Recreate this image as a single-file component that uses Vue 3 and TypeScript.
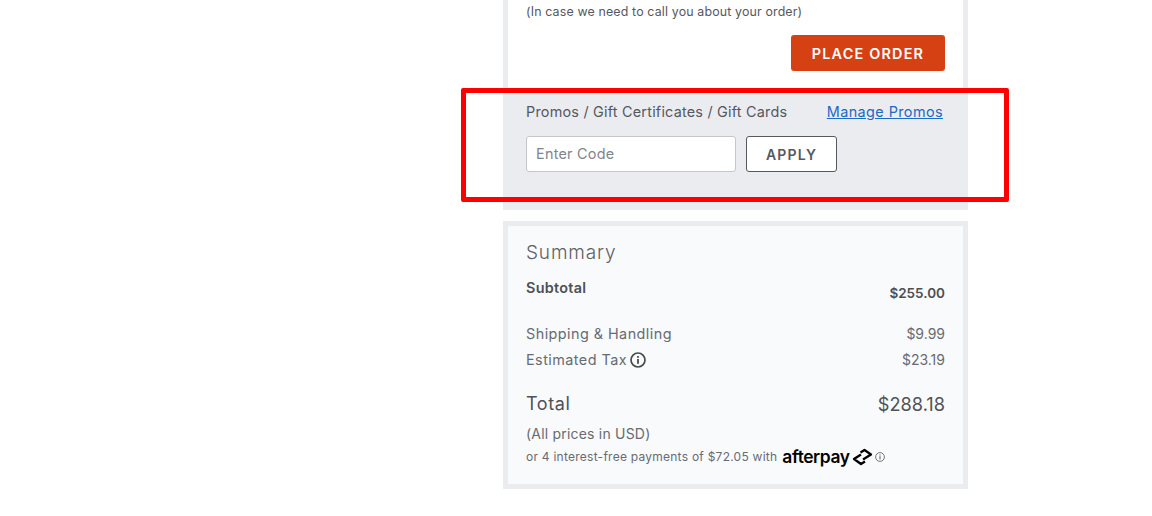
<script setup lang="ts">
interface Charge {
  label: string;
  amount: string;
  info?: boolean;
}

const charges: Charge[] = [
  { label: 'Shipping & Handling', amount: '$9.99' },
  { label: 'Estimated Tax', amount: '$23.19', info: true },
];
</script>

<template>
  <div class="page">
    <div class="column">
      <section class="order-card">
        <div class="order-main">
          <p class="phone-note">(In case we need to call you about your order)</p>
          <div class="order-actions">
            <button class="place-order" type="button">PLACE ORDER</button>
          </div>
        </div>
        <div class="promo">
          <div class="promo-head">
            <span class="promo-title">Promos / Gift Certificates / Gift Cards</span>
            <a class="promo-link" href="#">Manage Promos</a>
          </div>
          <div class="promo-form">
            <input class="promo-input" type="text" placeholder="Enter Code" />
            <button class="apply" type="button">APPLY</button>
          </div>
        </div>
        <div class="highlight"></div>
      </section>

      <section class="summary">
        <h2 class="summary-title">Summary</h2>
        <div class="subtotal">
          <span class="subtotal-label">Subtotal</span>
          <span class="subtotal-value">$255.00</span>
        </div>
        <div class="charges">
          <div v-for="charge in charges" :key="charge.label" class="charge">
            <span class="charge-label">
              {{ charge.label }}
              <svg v-if="charge.info" class="info-icon" viewBox="0 0 16 16" width="16" height="16">
                <circle cx="8" cy="8" r="7" fill="none" stroke="#4a4a4a" stroke-width="1.7" />
                <rect x="7.1" y="7" width="1.8" height="4.8" fill="#4a4a4a" />
                <rect x="7.1" y="4" width="1.8" height="1.8" fill="#4a4a4a" />
              </svg>
            </span>
            <span class="charge-amount">{{ charge.amount }}</span>
          </div>
        </div>
        <div class="total">
          <span class="total-label">Total</span>
          <span class="total-value">$288.18</span>
        </div>
        <p class="currency">(All prices in USD)</p>
        <div class="afterpay">
          <span class="afterpay-text">or 4 interest-free payments of $72.05 with</span>
          <span class="afterpay-logo">afterpay</span>
          <svg class="afterpay-mark" viewBox="0 0 24 18" width="24" height="18">
            <path
              d="M11 6.5 L4 11 L11 16 L15 13.5 M13 11.5 L21 6.5 L14.5 2 L10.5 4.5"
              fill="none"
              stroke="#000"
              stroke-width="2.3"
              stroke-linejoin="round"
            />
          </svg>
          <svg class="small-info" viewBox="0 0 10 10" width="10" height="10">
            <circle cx="5" cy="5" r="4.4" fill="none" stroke="#555" stroke-width="0.8" />
            <rect x="4.5" y="4.2" width="1" height="3.2" fill="#555" />
            <rect x="4.5" y="2.5" width="1" height="1" fill="#555" />
          </svg>
        </div>
      </section>
    </div>
  </div>
</template>

<style>
html,
body {
  margin: 0;
  background: #fff;
}
</style>

<style scoped>
.page {
  height: 516px;
  overflow: hidden;
  padding-left: 503px;
  font-family: Inter, "Open Sans", sans-serif;
  color: #55585f;
}

.column {
  width: 465px;
  display: flex;
  flex-direction: column;
  gap: 11px;
}

.order-card {
  position: relative;
  border: 5px solid #ebecf0;
  border-top: 0;
}

.order-main {
  height: 88px;
  box-sizing: border-box;
  padding: 4px 18px 0;
}

.phone-note {
  margin: 0;
  font-size: 12.4px;
  line-height: 16px;
  letter-spacing: 0.15px;
  color: #55585f;
}

.order-actions {
  display: flex;
  justify-content: flex-end;
  margin-top: 15px;
}

.place-order {
  width: 154px;
  height: 36px;
  border: 0;
  border-radius: 3px;
  background: #d64114;
  color: #fff;
  font: 600 14.4px Inter, sans-serif;
  letter-spacing: 1.2px;
}

.promo {
  height: 117px;
  box-sizing: border-box;
  padding: 14px 18px 0;
  background: #ebecf0;
}

.promo-head {
  display: flex;
  justify-content: space-between;
  font-size: 14.4px;
  line-height: 20px;
  padding-right: 2px;
}

.promo-title {
  color: #55585f;
  letter-spacing: 0.22px;
}

.promo-link {
  color: #1b6ac4;
  font-size: 14.4px;
  letter-spacing: 0.42px;
}

.promo-form {
  display: flex;
  gap: 10px;
  margin-top: 14px;
}

.promo-input {
  width: 210px;
  height: 36px;
  box-sizing: border-box;
  padding: 0 9px 1px;
  border: 1px solid #c4c6cb;
  border-radius: 3px;
  background: #fff;
  font: 14.4px Inter, sans-serif;
  letter-spacing: 0.25px;
  outline: none;
}

.promo-input::placeholder {
  color: #81858c;
}

.apply {
  width: 91px;
  height: 36px;
  box-sizing: border-box;
  border: 1px solid #55585f;
  border-radius: 3px;
  background: #fff;
  color: #55585f;
  font: 600 14px Inter, sans-serif;
  letter-spacing: 1.2px;
}

.highlight {
  position: absolute;
  left: -47px;
  top: 88px;
  width: 548px;
  height: 114px;
  box-sizing: border-box;
  border: 5px solid #fe0000;
  border-radius: 2px;
  pointer-events: none;
}

.summary {
  height: 268px;
  box-sizing: border-box;
  padding: 15px 18px 0;
  border: 5px solid #ebecf0;
  background: #f9fafc;
}

.summary-title {
  margin: 0;
  font-size: 19px;
  line-height: 24px;
  font-weight: 300;
  letter-spacing: 0.85px;
  color: #5e6167;
}

.subtotal {
  display: flex;
  justify-content: space-between;
  margin-top: 13px;
  font-weight: 600;
  font-size: 13.5px;
  color: #4d4f54;
}

.subtotal-label {
  line-height: 20px;
  font-size: 14.4px;
  letter-spacing: 0.3px;
}

.subtotal-value {
  line-height: 20px;
  margin-top: 5px;
}

.charges {
  margin-top: 18px;
}

.charge {
  display: flex;
  justify-content: space-between;
  font-size: 14.4px;
  line-height: 26px;
  letter-spacing: 0.45px;
  color: #686b72;
}

.charge-amount {
  font-size: 14px;
  letter-spacing: 0;
}

.charge-label {
  display: flex;
  align-items: center;
  gap: 3px;
}

.total {
  display: flex;
  justify-content: space-between;
  margin-top: 18px;
  font-size: 18px;
  line-height: 26px;
  color: #505257;
}

.total-label {
  letter-spacing: 0.6px;
}

.total-value {
  font-size: 18.2px;
}

.currency {
  margin: 7px 0 0;
  font-size: 14px;
  line-height: 20px;
  letter-spacing: 0.2px;
  color: #686b72;
}

.afterpay {
  display: flex;
  align-items: center;
  margin-top: 3px;
  font-size: 12px;
  line-height: 20px;
  color: #686b72;
}

.afterpay-text {
  letter-spacing: 0.25px;
}

.afterpay-logo {
  margin-left: 5px;
  font-size: 17.4px;
  font-weight: 600;
  letter-spacing: -0.4px;
  color: #000;
}

.afterpay-mark {
  flex-shrink: 0;
}

.small-info {
  margin-left: 1px;
}
</style>
